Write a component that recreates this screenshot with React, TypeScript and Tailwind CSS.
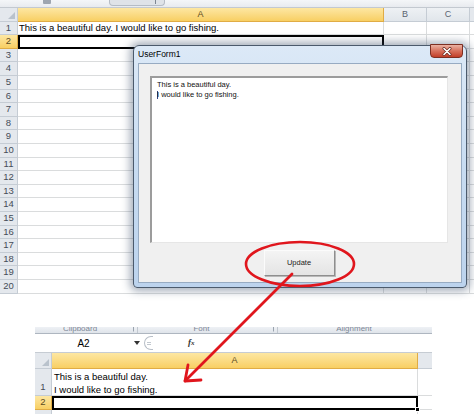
import React from "react";

const rows = Array.from({ length: 20 }, (_, i) => i + 1);

// 13 / 14 px alternation gives the ~13.6px row pitch of the capture
function rowHeight(n: number) {
  const k = n % 5;
  return k === 1 || k === 3 ? "h-[13px]" : "h-[14px]";
}

function Corner() {
  return (
    <div className="w-full h-full flex items-end justify-end pr-[2px] pb-[2px]">
      <svg width="7" height="7" viewBox="0 0 7 7">
        <path d="M7 0 L7 7 L0 7 Z" fill="#b9c2cc" />
      </svg>
    </div>
  );
}

function Sheet() {
  return (
    <div className="flex flex-col">
      {/* ribbon remnant */}
      <div className="h-[8px] flex bg-gradient-to-b from-[#f4f6f8] to-[#e8ebef] border-b border-[#c3c9d0]">
        <div className="ml-[43px] w-[8px] h-[4px] bg-[#9ea6b0] rounded-b-[1px]" />
        <div className="ml-[58px] w-[56px] h-[6px] rounded-b-[4px] border border-t-0 border-[#b5bcc5] bg-[#dfe3e8] flex justify-end pr-[8px]">
          <div className="w-[1px] h-[4px] bg-[#7d8692]" />
        </div>
      </div>
      {/* column headers */}
      <div className="flex h-[14px] text-[9px] leading-none">
        <div className="w-[18px] bg-[#e4e8ed] border-r border-b border-[#c5ccd4]">
          <Corner />
        </div>
        <div className="w-[366px] bg-gradient-to-b from-[#fde7a2] to-[#f8cf62] border-r border-b border-[#e0ac45] flex items-center justify-center text-[#5b4b1e]">
          A
        </div>
        <div className="w-[43px] bg-gradient-to-b from-[#eef1f4] to-[#e1e6eb] border-r border-b border-[#c5ccd4] flex items-center justify-center text-[#5a6470]">
          B
        </div>
        <div className="w-[43px] bg-gradient-to-b from-[#eef1f4] to-[#e1e6eb] border-r border-b border-[#c5ccd4] flex items-center justify-center text-[#5a6470]">
          C
        </div>
        <div className="flex-1 bg-[#e4e8ed] border-b border-[#c5ccd4]" />
      </div>
      {rows.map((n) => (
        <div key={n} className={`flex ${rowHeight(n)}`}>
          <div
            className={
              n === 2
                ? "w-[18px] bg-gradient-to-b from-[#fde7a2] to-[#f8cf62] border-r border-b border-[#e0ac45] flex items-center justify-center text-[9.5px] text-[#5b4b1e]"
                : "w-[18px] bg-[#e4e8ed] border-r border-b border-[#c5ccd4] flex items-center justify-center text-[9.5px] text-[#444c58]"
            }
          >
            {n}
          </div>
          {n === 2 ? (
            <div className="w-[366px] border-2 border-black" />
          ) : (
            <div className="w-[366px] border-r border-b border-[#dadcdd] flex items-center whitespace-nowrap pl-[1px] text-[9.5px] text-black">
              {n === 1 ? "This is a beautiful day. I would like to go fishing." : ""}
            </div>
          )}
          <div className="w-[43px] border-r border-b border-[#dadcdd]" />
          <div className="w-[43px] border-r border-b border-[#dadcdd]" />
          <div className="flex-1 border-b border-[#dadcdd]" />
        </div>
      ))}
    </div>
  );
}

function Launcher() {
  return (
    <svg width="6" height="6" viewBox="0 0 6 6" className="mt-[-1px]">
      <path d="M0.5 0.5 H5.5 V5.5" fill="none" stroke="#9aa3ae" strokeWidth="1" />
    </svg>
  );
}

function Excerpt() {
  return (
    <div className="ml-[35px] mt-[33px] w-[397px] flex flex-col">
      <div className="h-[7px] overflow-hidden flex items-start bg-gradient-to-b from-[#eef1f5] to-[#dfe4ea] border-b border-[#aeb6c0] text-[8px] leading-[8px] text-[#7d8796]">
        <div className="w-[90px] text-center -mt-[2px]">Clipboard</div>
        <div className="w-[12px] flex justify-center">
          <Launcher />
        </div>
        <div className="w-[1px] h-full bg-[#c2c8d0]" />
        <div className="w-[127px] text-center -mt-[2px]">Font</div>
        <div className="w-[12px] flex justify-center">
          <Launcher />
        </div>
        <div className="w-[1px] h-full bg-[#c2c8d0]" />
        <div className="flex-1 text-center -mt-[2px] pr-[2px]">Alignment</div>
      </div>
      <div className="h-[19px] flex items-center bg-white border-b border-[#c6ccd3] text-[10px] text-black">
        <div className="w-[97px] text-center">A2</div>
        <svg width="6" height="4" viewBox="0 0 6 4" className="ml-[2px]">
          <path d="M0 0 H6 L3 4 Z" fill="#333" />
        </svg>
        <div className="ml-[4px] w-[9px] h-[14px] rounded-l-full border border-r-0 border-[#b7bec7] flex items-center justify-center">
          <div className="w-[4px] h-[3px] border-t border-b border-[#c2c8cf]" />
        </div>
        <div className="ml-[35px] italic font-bold text-[9px] text-[#333] font-['Liberation_Serif',serif]">
          f<span className="text-[7px]">x</span>
        </div>
      </div>
      <div className="flex h-[16px] text-[9px] leading-none">
        <div className="w-[17px] bg-[#e4e8ed] border-r border-b border-[#c5ccd4]">
          <Corner />
        </div>
        <div className="w-[366px] bg-gradient-to-b from-[#fde7a2] to-[#f8cf62] border-r border-b border-[#e0ac45] flex items-center justify-center text-[#5b4b1e]">
          A
        </div>
        <div className="flex-1 bg-[#e4e8ed] border-b border-[#c5ccd4]" />
      </div>
      <div className="flex h-[27px]">
        <div className="w-[17px] bg-[#e4e8ed] border-r border-b border-[#c5ccd4] flex items-end justify-center pb-[1px] text-[9.5px] text-[#444c58]">
          1
        </div>
        <div className="w-[366px] border-r border-b border-[#dadcdd] pl-[2px] pt-[2px] text-[9.5px] leading-[12.5px] text-black">
          <div>This is a beautiful day.</div>
          <div>I would like to go fishing.</div>
        </div>
        <div className="flex-1 border-b border-[#dadcdd]" />
      </div>
      <div className="flex h-[14px]">
        <div className="w-[17px] bg-gradient-to-b from-[#fde7a2] to-[#f8cf62] border-r border-b border-[#e0ac45] flex items-center justify-center text-[9.5px] text-[#5b4b1e]">
          2
        </div>
        <div className="relative w-[366px] border-2 border-black">
          <div className="absolute -right-[4px] -bottom-[4px] w-[5px] h-[5px] bg-black border border-white" />
        </div>
        <div className="flex-1 border-b border-[#dadcdd]" />
      </div>
      <div className="flex h-[10px]">
        <div className="w-[17px] bg-[#e4e8ed] border-r border-[#c5ccd4]" />
        <div className="w-[366px] border-r border-[#dadcdd]" />
      </div>
    </div>
  );
}

function UserForm() {
  return (
    <div className="absolute left-[133px] top-[45px] w-[334px] h-[243px] rounded-t-[6px] rounded-b-[4px] border border-[#4b5a6c] bg-gradient-to-b from-[#dce9f7] via-[#c8dcf1] to-[#bcd3ed] shadow-[0_0_9px_3px_rgba(50,70,100,0.45)] flex flex-col px-[4px] pb-[4px] font-['Liberation_Sans',Arial,sans-serif]">
      <div className="h-[17px] flex items-center text-[8.5px] text-black">UserForm1</div>
      <div className="flex-1 bg-[#f0f0f0] border border-[#97abc2] pl-[11px] pt-[12px]">
        <div className="w-[298px] flex flex-col items-center">
          <div className="w-[298px] h-[167px] bg-white border-t-2 border-l-2 border-t-[#9c9c9c] border-l-[#9c9c9c] border-r border-b border-r-[#e6e6e6] border-b-[#e6e6e6] pl-[5px] pt-[2px] text-[7.5px] leading-[10px] text-[#111]">
            <div>This is a beautiful day.</div>
            <div className="flex items-center">
              <span className="inline-block w-[1px] h-[8px] bg-[#2c3f86]" />
              <span className="ml-[-1px]">I would like to go fishing.</span>
            </div>
          </div>
          <button className="mt-[7px] w-[71px] h-[26px] bg-gradient-to-b from-[#f4f4f4] to-[#e4e4e4] border border-t-[#fbfbfb] border-l-[#fbfbfb] border-r-[#8e8e8e] border-b-[#8e8e8e] shadow-[1px_1px_0_#b8b8b8] text-[7.5px] text-[#222] flex items-center justify-center">
            Update
          </button>
        </div>
      </div>
      <div className="absolute top-[-2px] right-[3px] w-[33px] h-[14px] rounded-b-[4px] border border-[#7d2f22] bg-gradient-to-b from-[#eab2a3] via-[#d6705c] to-[#c23d27] flex items-center justify-center">
        <svg width="10" height="9" viewBox="0 0 10 9">
          <path d="M2 1.5 L8 7.5 M8 1.5 L2 7.5" stroke="#6b2a20" strokeWidth="3" strokeLinecap="round" />
          <path d="M2 1.5 L8 7.5 M8 1.5 L2 7.5" stroke="#ffffff" strokeWidth="1.6" strokeLinecap="round" />
        </svg>
      </div>
    </div>
  );
}

function Annotations() {
  return (
    <svg
      className="absolute left-0 top-0 pointer-events-none"
      width="474"
      height="414"
      viewBox="0 0 474 414"
    >
      <ellipse cx="300" cy="264" rx="54" ry="22" fill="none" stroke="#e0161d" strokeWidth="2.6" />
      <path d="M292 274 L185 381" stroke="#e0161d" strokeWidth="2.8" strokeLinecap="round" />
      <path d="M201 380 L185 381 L188 365" fill="none" stroke="#e0161d" strokeWidth="2.8" strokeLinecap="round" strokeLinejoin="round" />
    </svg>
  );
}

export default function App() {
  return (
    <div className="relative w-[474px] h-[414px] overflow-hidden bg-white font-['Liberation_Sans',Arial,sans-serif]">
      <Sheet />
      <Excerpt />
      <UserForm />
      <Annotations />
    </div>
  );
}
